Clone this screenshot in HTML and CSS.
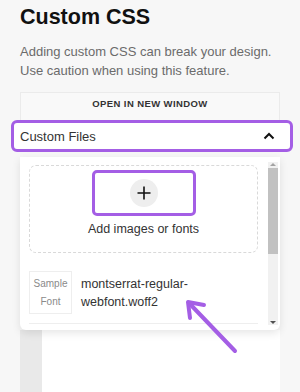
FILE: index.html
```html
<!DOCTYPE html>
<html lang="en">
<head>
    <meta charset="UTF-8">
    <meta name="viewport" content="width=device-width, initial-scale=1.0">
    <title>Custom CSS</title>
    <link rel="stylesheet" href="styles.css">
</head>
<body>
    <div class="panel">
        <h1 class="title">Custom CSS</h1>
        <p class="intro">Adding custom CSS can break your design.<br>Use caution when using this feature.</p>

        <button class="open-btn">OPEN IN NEW WINDOW</button>

        <div class="files-select">
            <span>Custom Files</span>
            <svg class="chevron" width="12" height="8" viewBox="0 0 12 8">
                <path d="M1.5 6.5 L6 2 L10.5 6.5" fill="none" stroke="#111" stroke-width="2"/>
            </svg>
        </div>

        <div class="files-card">
            <div class="files-list">
                <div class="drop-zone">
                    <div class="add-btn">
                        <span class="add-circle">
                            <svg width="14" height="14" viewBox="0 0 14 14">
                                <path d="M7 0.5 V13.5 M0.5 7 H13.5" stroke="#111" stroke-width="1.6"/>
                            </svg>
                        </span>
                    </div>
                    <div class="drop-label">Add images or fonts</div>
                </div>

                <div class="file-row">
                    <div class="sample">Sample<br>Font</div>
                    <div class="file-name">montserrat-regular-<br>webfont.woff2</div>
                </div>
                <div class="divider"></div>
            </div>

            <div class="scrollbar">
                <span class="arrow-up"></span>
                <div class="track"><div class="thumb"></div></div>
                <span class="arrow-down"></span>
            </div>
        </div>

        <div class="editor">
            <div class="gutter"></div>
            <div class="code"></div>
        </div>
    </div>

    <!-- flecha de anotación -->
    <svg class="pointer" width="60" height="62" viewBox="0 0 60 62">
        <g fill="none" stroke="#a45ee5" stroke-width="4" stroke-linecap="round" stroke-linejoin="round">
            <path d="M55 55 L9 7"/>
            <path d="M24 9 L8 6 L10 22"/>
        </g>
    </svg>
</body>
</html>
```

FILE: styles.css
```css
body {
    margin: 0;
    background: #f7f7f7;
    font-family: 'Liberation Sans', Arial, sans-serif;
    color: #333;
    height: 392px;
    overflow: hidden;
    position: relative;
}

.panel {
    width: 260px;
    margin-left: 20px;
    padding-top: 3px;
}

.title {
    margin: 0;
    font-size: 21.5px;
    font-weight: bold;
    line-height: 28px;
    color: #111;
}

.intro {
    margin: 11px 0 0;
    font-size: 13px;
    line-height: 19px;
    color: #6b6b6b;
    white-space: nowrap;
}

.open-btn {
    display: block;
    width: 260px;
    height: 30px;
    margin-top: 12px;
    background: #f9f9f9;
    border: 1px solid #ebebeb;
    font-family: inherit;
    font-size: 9.5px;
    font-weight: bold;
    letter-spacing: 0.4px;
    color: #333;
    padding: 0 0 7px;
}

.files-select {
    display: flex;
    align-items: center;
    justify-content: space-between;
    height: 26px;
    margin: -2px -13px 0 -9px;
    padding: 0 15px 0 6px;
    background: #fff;
    border: 3px solid #a45ee5;
    border-radius: 6px;
    font-size: 13px;
    color: #333;
}

.files-card {
    display: flex;
    margin-top: 5px;
    height: 173px;
    background: #fff;
    border-radius: 0 0 6px 6px;
    box-shadow: 0 3px 8px rgba(0, 0, 0, 0.1);
    position: relative;
    z-index: 1;
}

.files-list {
    width: 229px;
    padding: 8px 0 0 9px;
}

.drop-zone {
    height: 86px;
    border: 1px dashed #d9d9d9;
    border-radius: 7px;
    display: flex;
    flex-direction: column;
    align-items: center;
}

.add-btn {
    width: 98px;
    height: 40px;
    margin-top: 4px;
    border: 3px solid #a45ee5;
    border-radius: 5px;
    display: flex;
    align-items: center;
    justify-content: center;
}

.add-circle {
    width: 28px;
    height: 28px;
    border-radius: 50%;
    background: #eeeeee;
    display: flex;
    align-items: center;
    justify-content: center;
}

.drop-label {
    margin-top: 6px;
    font-size: 12.5px;
    color: #333;
}

.file-row {
    display: flex;
    margin-top: 18px;
}

.sample {
    width: 41px;
    height: 41px;
    border: 1px solid #eeeeee;
    font-size: 10px;
    line-height: 18px;
    color: #8a8a8a;
    text-align: center;
    display: flex;
    align-items: center;
    justify-content: center;
}

.file-name {
    margin-left: 9px;
    padding-top: 4px;
    font-size: 12.5px;
    line-height: 18px;
    color: #333;
    white-space: nowrap;
}

.divider {
    margin-top: 9px;
    height: 1px;
    background: #eeeeee;
}

.scrollbar {
    width: 10px;
    margin: 5px 0 0 10px;
    height: 163px;
    display: flex;
    flex-direction: column;
    align-items: center;
    background: #f1f1f1;
}

.track {
    flex: 1;
    width: 10px;
    margin: 2px 0;
}

.thumb {
    height: 86px;
    background: #c1c1c1;
}

.arrow-up,
.arrow-down {
    width: 0;
    height: 0;
    margin-top: 1px;
    border-left: 3px solid transparent;
    border-right: 3px solid transparent;
}

.arrow-up {
    border-bottom: 3px solid #a3a3a3;
}

.arrow-down {
    border-top: 3px solid #505050;
    margin-bottom: 1px;
}

.editor {
    display: flex;
    height: 64px;
}

.gutter {
    width: 22px;
    background: #e9e9e9;
}

.code {
    flex: 1;
    background: #fff;
}

.pointer {
    position: absolute;
    left: 180px;
    top: 296px;
    z-index: 2;
}
```
